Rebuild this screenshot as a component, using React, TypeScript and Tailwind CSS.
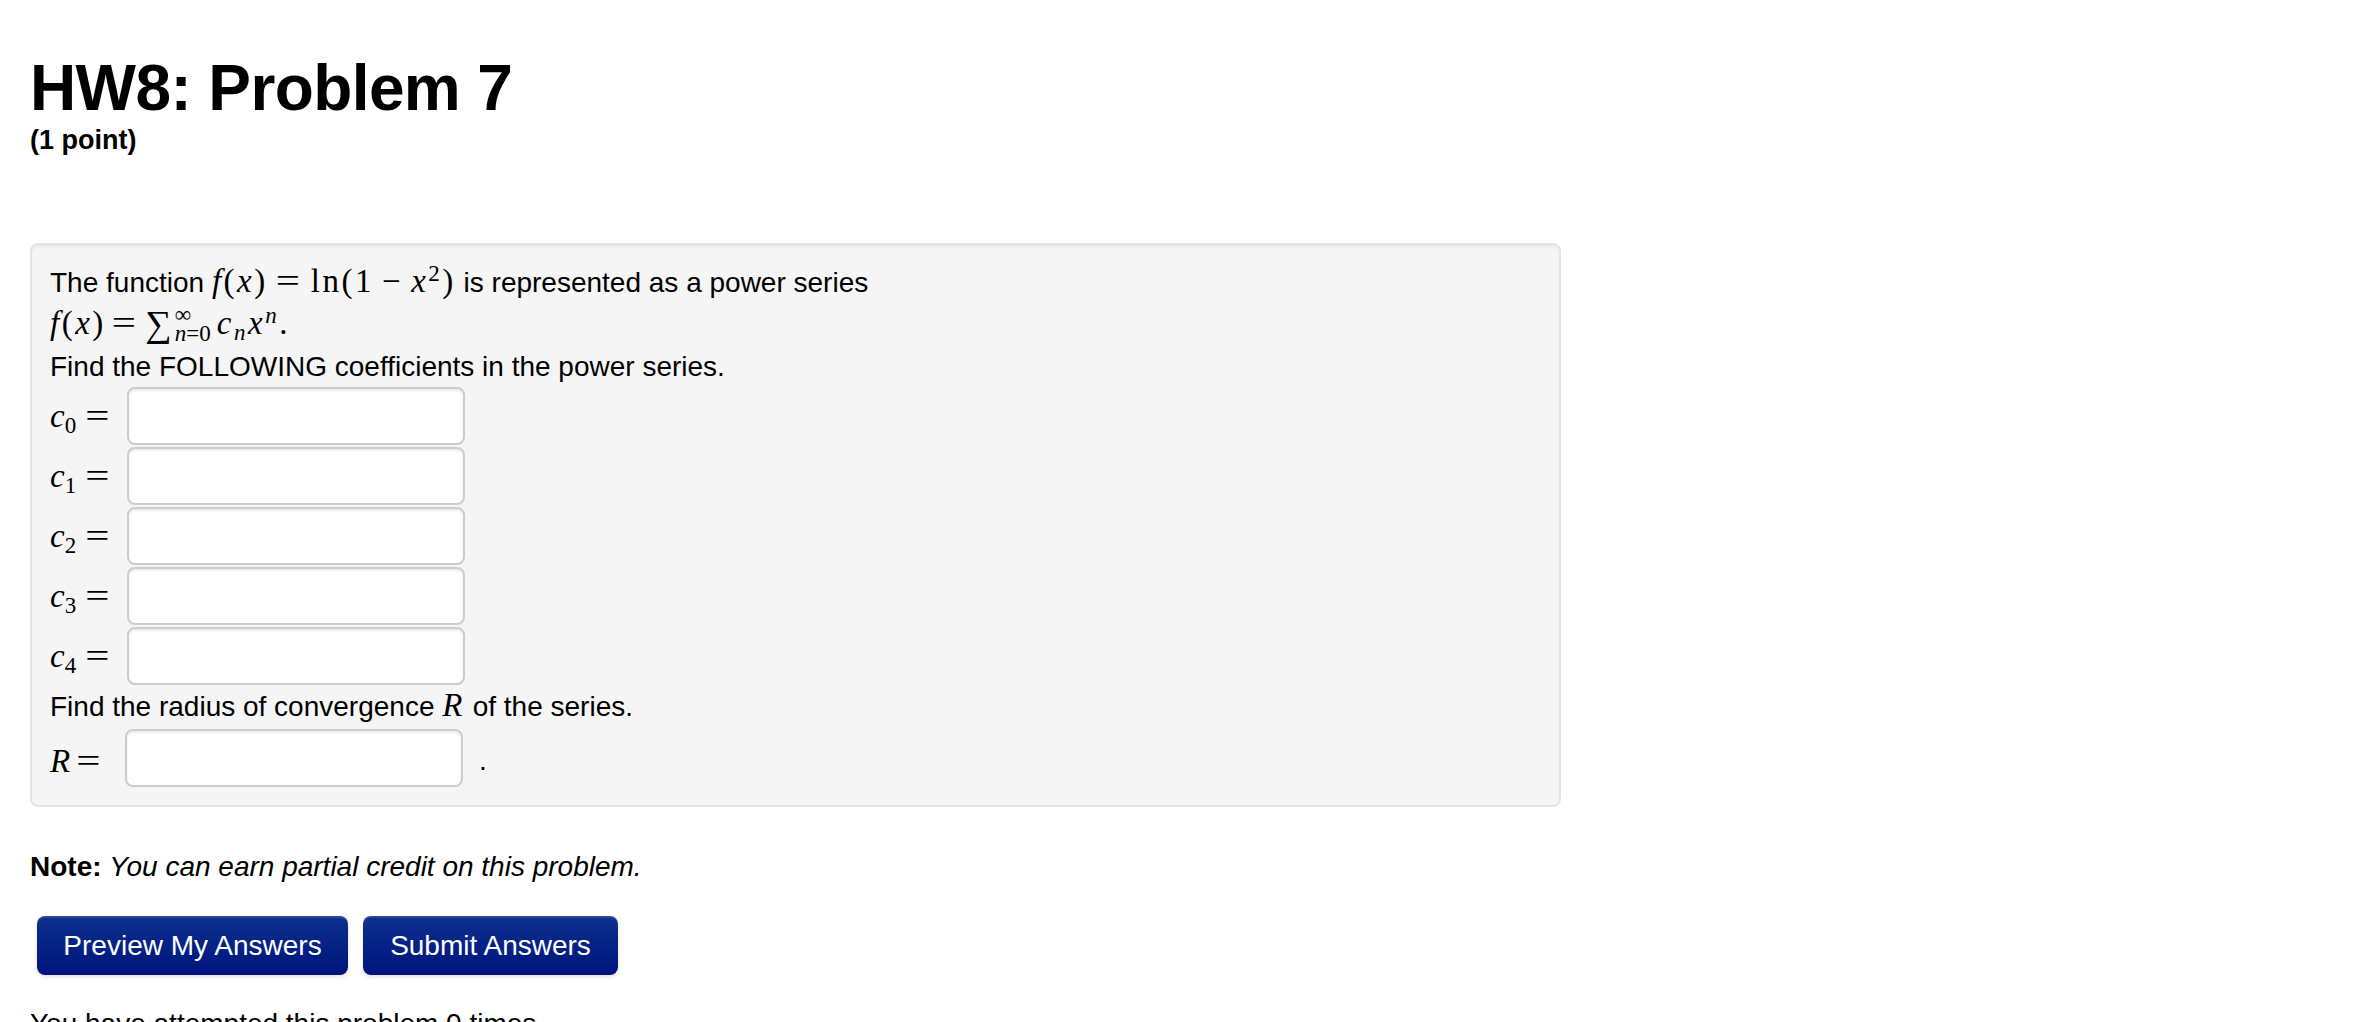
import React from 'react';

const math = "font-['Liberation_Serif','DejaVu_Serif',serif] text-[33px] leading-none tracking-[2.5px]";

const M: React.FC<{ children: React.ReactNode; className?: string }> = ({ children, className }) => (
  <span className={`${math} ${className ?? ''}`}>{children}</span>
);

const Eq: React.FC<{ className?: string }> = ({ className }) => (
  <span className={`inline-block scale-x-[1.3] ${className ?? 'mx-[11px]'}`}>=</span>
);

const inputCls =
  'h-[58px] w-[338px] rounded-[8px] border-2 border-[#cccccc] bg-white shadow-[inset_0_2px_2px_rgba(0,0,0,0.075)] outline-none';

const coeffs = ['0', '1', '2', '3', '4'];

const App: React.FC = () => {
  return (
    <div className="min-h-screen bg-white px-[30px] font-['Liberation_Sans',Arial,sans-serif] text-black">
      <h1 className="pt-[53px] text-[64px] leading-[70px] font-bold tracking-[-0.6px]">HW8: Problem 7</h1>
      <h3 className="text-[27px] leading-[34px] font-bold">(1 point)</h3>

      {/* problem body */}
      <div className="mt-[86px] w-[1531px] rounded-[8px] border-2 border-[#e3e3e3] bg-[#f5f5f5] px-[18px] pt-[18px] pb-[18px] text-[28px] shadow-[inset_0_2px_2px_rgba(0,0,0,0.05)]">
        <div className="h-[40px] leading-[40px] whitespace-nowrap">
          The function{' '}
          <M>
            <i>f</i>(<i>x</i>)<Eq />ln(1<span className="mx-[8px]">−</span>
            <i>x</i>
            <sup className="text-[23px]">2</sup>)
          </M>{' '}
          is represented as a power series
        </div>
        <div className="h-[44px] leading-[44px] whitespace-nowrap">
          <M className="tracking-[0.5px]">
            <i>f</i>(<i>x</i>)<Eq className="mx-[9px]" />
            <span className="relative top-[2px] text-[37px]">∑</span>
            <span className="ml-[1px] inline-flex flex-col align-[12px] text-[23px] leading-[19px] tracking-normal">
              <span>∞</span>
              <span>
                <i>n</i>=0
              </span>
            </span>
            <span className="ml-[6px]">
              <i>c</i>
              <sub className="text-[23px]">
                <i>n</i>
              </sub>
              <i>x</i>
              <sup className="text-[23px]">
                <i>n</i>
              </sup>
              .
            </span>
          </M>
        </div>
        <div className="h-[40px] leading-[40px]">Find the FOLLOWING coefficients in the power series.</div>

        {coeffs.map((n) => (
          <div key={n} className="flex h-[60px] items-start">
            <div className="flex h-[58px] w-[77px] items-center pt-[1px]">
              <M className="tracking-normal">
                <i>c</i>
                <sub className="text-[23px]">{n}</sub>
                <Eq className="ml-[12px]" />
              </M>
            </div>
            <input type="text" className={inputCls} />
          </div>
        ))}

        <div className="h-[40px] leading-[40px]">
          Find the radius of convergence{' '}
          <M>
            <i>R</i>
          </M>{' '}
          of the series.
        </div>
        <div className="mt-[2px] flex h-[58px] items-center">
          <div className="flex w-[75px] items-center pt-[6px]">
            <M className="tracking-normal">
              <i>R</i>
              <Eq className="ml-[9px]" />
            </M>
          </div>
          <input type="text" className={inputCls} />
          <span className="ml-[16px] pt-[6px]">.</span>
        </div>
      </div>

      <p className="mt-[40px] h-[40px] text-[28px] leading-[40px]">
        <b>Note:</b> <i>You can earn partial credit on this problem.</i>
      </p>

      <div className="mt-[29px] ml-[7px] flex gap-[15px]">
        <button className="flex h-[59px] w-[311px] items-center justify-center rounded-[8px] bg-linear-to-b from-[#0f2f8c] to-[#00137e] text-[28px] text-white shadow-[inset_0_2px_0_rgba(255,255,255,0.12),0_2px_4px_rgba(0,0,0,0.12)]">
          Preview My Answers
        </button>
        <button className="flex h-[59px] w-[255px] items-center justify-center rounded-[8px] bg-linear-to-b from-[#0f2f8c] to-[#00137e] text-[28px] text-white shadow-[inset_0_2px_0_rgba(255,255,255,0.12),0_2px_4px_rgba(0,0,0,0.12)]">
          Submit Answers
        </button>
      </div>

      <p className="mt-[29px] h-[40px] text-[28px] leading-[40px]">You have attempted this problem 0 times.</p>
    </div>
  );
};

export default App;
